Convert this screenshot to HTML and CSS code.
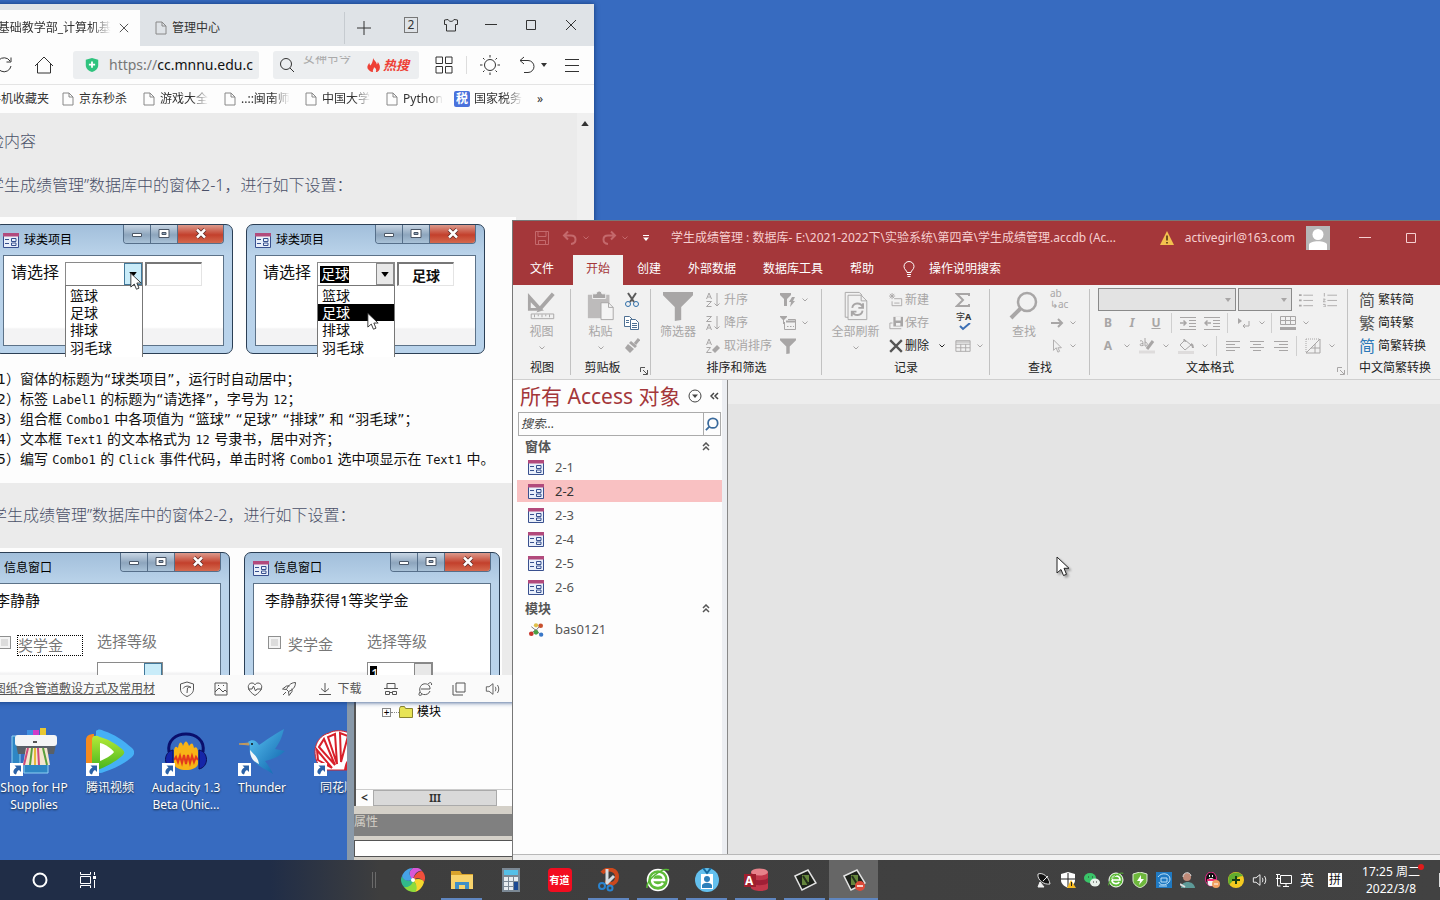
FILE: index.html
```html
<!DOCTYPE html>
<html lang="zh-CN">
<head>
  <meta charset="UTF-8">
  <title>学生成绩管理</title>
  <link rel="stylesheet" href="styles.css">
</head>
<body>
  <!-- Icon sprite -->
  <svg class="sprite" aria-hidden="true">
    <defs>
      <linearGradient id="sky" x1="0" y1="0" x2="1" y2="1"><stop offset="0" stop-color="#5cc6f4"/><stop offset="1" stop-color="#0a5ea8"/></linearGradient>
      <linearGradient id="lime" x1="0" y1="0" x2="0" y2="1"><stop offset="0" stop-color="#b5ea38"/><stop offset="1" stop-color="#46b51c"/></linearGradient>
    </defs>
    <symbol id="i-x" viewBox="0 0 12 12"><path d="M1 1l10 10M11 1L1 11"/></symbol>
    <symbol id="i-page" viewBox="0 0 12 14"><path d="M1 1h6l4 4v8H1zM7 1v4h4"/></symbol>
    <symbol id="i-plus" viewBox="0 0 14 14"><path d="M7 0v14M0 7h14"/></symbol>
    <symbol id="i-min" viewBox="0 0 12 12"><path d="M0 5.500h12"/></symbol>
    <symbol id="i-max" viewBox="0 0 12 12"><path d="M1.500 1.500h9v9h-9z"/></symbol>
    <symbol id="i-shirt" viewBox="0 0 16 14"><path d="M5 1.500L1.500 2v4.500h2V13h9V6.500h2V2L11 1.500C10 4 6 4 5 1.500z"/></symbol>
    <symbol id="i-reload" viewBox="0 0 18 18"><path d="M15 5a7 7 0 1 0 1 5M16 1.500V6h-4.500"/></symbol>
    <symbol id="i-home" viewBox="0 0 20 18"><path d="M1 10L10 1l9 9M3.500 8v9h13V8"/></symbol>
    <symbol id="i-shield" viewBox="0 0 16 18"><path d="M8 1l7 2v6c0 4-3 6.500-7 8-4-1.500-7-4-7-8V3z" fill="#2fc37e" stroke="none"/><path d="M8 5v7M4.500 8.500h7" stroke="#fff" stroke-width="2"/></symbol>
    <symbol id="i-search" viewBox="0 0 16 16"><circle cx="7" cy="7" r="5.500"/><path d="M11 11l4 4"/></symbol>
    <symbol id="i-flame" viewBox="0 0 14 15"><path d="M6 0c1 3 4 4 4 7 1-1 1-2 1-3 2 3 3 5 2 8-1 2-2 3-4 3 1-2 0-4-2-5 0 2-2 3-1 5-3 0-5-2-6-4-.5-3 1-4 2-6 0 1 .5 2 1 3C5 6 6 3 6 0z" fill="#ee4035" stroke="none"/></symbol>
    <symbol id="i-apps" viewBox="0 0 18 18"><path d="M1 1h6.500v6.500H1zM10.500 1H17v6.500h-6.500zM1 10.500h6.500V17H1zM10.500 10.500H17V17h-6.500z"/></symbol>
    <symbol id="i-sun" viewBox="0 0 20 20"><circle cx="10" cy="10" r="5.500"/><path d="M10 0v2.500M10 17.500V20M0 10h2.500M17.500 10H20M3 3l1.500 1.500M15.500 15.500L17 17M3 17l1.500-1.500M15.500 4.500L17 3"/></symbol>
    <symbol id="i-back" viewBox="0 0 18 18"><path d="M6 1L2 4.500 6 8M2 4.500h8a6 6 0 0 1 0 12H6"/></symbol>
    <symbol id="i-menu" viewBox="0 0 16 16"><path d="M1 2.500h14M1 8.500h14M1 14.500h14"/></symbol>
    <symbol id="i-tri" viewBox="0 0 6 4"><path d="M0 0h6L3 4z" fill="currentColor" stroke="none"/></symbol>
    <symbol id="i-chev" viewBox="0 0 6 4"><path d="M.5.5L3 3 5.500.5"/></symbol>
    <symbol id="i-form" viewBox="0 0 16 15"><path d="M.5.5h15v14H.5z" fill="#e9effa" stroke="#39508f"/><path d="M0 0h16v3.500H0z" fill="#b24a7c" stroke="none"/><path d="M2 6.500h4M2 10.500h4M8.500 5.500h4.500v3H8.500zM8.500 10h4.500v2.500H8.500z" stroke="#37508f"/></symbol>
    <symbol id="i-cursor" viewBox="0 0 14 21"><path d="M1 1v16l4-3.500 2.500 6 3-1.200-2.500-6H13z" fill="#fff" stroke="#222"/></symbol>
    <symbol id="w-min" viewBox="0 0 14 12"><path d="M2.500 5.500h9v3h-9z" fill="#fff" stroke="#4a5666"/></symbol>
    <symbol id="w-max" viewBox="0 0 14 12"><path d="M2 1.500h10v8H2z" fill="#fff" stroke="#4a5666"/><path d="M5 4.500h4v2H5z" fill="#8fa5bb" stroke="#4a5666"/></symbol>
    <symbol id="w-close" viewBox="0 0 14 12"><path d="M3 1.500l8 8M11 1.500l-8 8" stroke="#5c2a26" stroke-width="4"/><path d="M3 1.500l8 8M11 1.500l-8 8" stroke="#fff" stroke-width="2.500"/></symbol>
    <!-- status bar -->
    <symbol id="i-guard" viewBox="0 0 16 16"><path d="M8 1l6.500 2v5c0 4-3 6-6.500 7.500C4.500 14 1.500 12 1.500 8V3z"/><path d="M4 7.500c2-3 6-3 8-1-2-.5-3 0-3.500.5L8 12"/></symbol>
    <symbol id="i-pic" viewBox="0 0 16 16"><path d="M2 2h12v12H2zM2 11l4-4 4 4 2-2 2 2M5 4.500h1M10 4.500h1"/></symbol>
    <symbol id="i-heart" viewBox="0 0 16 16"><path d="M8 14.500C-2 8 1 2 5 2c2 0 3 1.500 3 2 0-.5 1-2 3-2 4 0 7 6-3 12.500zM1 8h4l1.500-3 2 5L10 8h5"/></symbol>
    <symbol id="i-rocket" viewBox="0 0 16 16"><path d="M14.500 1.500c-5 0-8 4-9 7l2 2c4-1.500 7-4 7-9zM5.500 8.500l-4-.5 4-3h3M7.500 10.500l.5 4 3-4v-3M2 14l3-3"/></symbol>
    <symbol id="i-down" viewBox="0 0 14 14"><path d="M7 1v9M3 6.500L7 10l4-3.500M1 12.500h12"/></symbol>
    <symbol id="i-spy" viewBox="0 0 16 16"><path d="M4 7V2.500h8V7M1 7.500h14M2.500 10.500h4v3h-4zM9.500 10.500h4v3h-4zM6.500 11.500h3"/></symbol>
    <symbol id="i-ie" viewBox="0 0 16 16"><path d="M13 10c-1 3-4 4-6.500 3.500-4-1-4.500-5-3-8C5 2.500 9 2 11.500 4c1.500 1.500 1.500 3 1.500 4H4M11 3c2-2 4-2 3.500 1M3 11c-2 3-1 4.500 2 2.500"/></symbol>
    <symbol id="i-wins" viewBox="0 0 16 16"><path d="M5 2h9v9H5zM2 4v10h10"/></symbol>
    <symbol id="i-sound" viewBox="0 0 18 16"><path d="M1.500 5.500h3L9 2v12l-4.500-3.500h-3zM11.500 5.500c1 1.500 1 3.500 0 5M14 3.500c2 3 2 6 0 9"/></symbol>
    <!-- ribbon -->
    <symbol id="r-save" viewBox="0 0 16 16"><path d="M1.500 1.500h13v13h-13zM4 1.500v5h8v-5M4.500 14.500v-4h7v4"/></symbol>
    <symbol id="r-undo" viewBox="0 0 16 16"><path d="M6 1.500l-4 4 4 4M2 5.500h7c6 0 6 8 0 8.500" stroke-width="2"/></symbol>
    <symbol id="r-redo" viewBox="0 0 16 16"><path d="M10 1.500l4 4-4 4M14 5.500H7c-6 0-6 8 0 8.500" stroke-width="2"/></symbol>
    <symbol id="r-qat" viewBox="0 0 6 6"><path d="M0 .5h6" /><path d="M0 2.500h6L3 6z" fill="currentColor" stroke="none"/></symbol>
    <symbol id="r-bulb" viewBox="0 0 12 16"><path d="M4 11.500c0-2-3-3-3-6a5 5 0 0 1 10 0c0 3-3 4-3 6zM4 13.500h4M4.500 15.500h3"/></symbol>
    <symbol id="r-warn" viewBox="0 0 14 14"><path d="M7 0l7 14H0z" fill="#f3c14e" stroke="none"/><path d="M7 4.500v5M7 11v1.500" stroke="#4b2a10" stroke-width="1.500"/></symbol>
    <symbol id="r-user" viewBox="0 0 24 24"><path d="M0 0h24v24H0z" fill="#b6b6b6" stroke="none"/><circle cx="12" cy="8.500" r="5.500" fill="#fff" stroke="none"/><path d="M3 24v-5c0-5 18-5 18 0v5z" fill="#fff" stroke="none"/></symbol>
    <symbol id="r-view" viewBox="0 0 32 30"><path d="M1 1l17 19H1z" fill="currentColor" stroke="none"/><path d="M4 11v6h6z" fill="#f1f1f1" stroke="none"/><path d="M28 2L14 18" stroke-width="4"/><path d="M13 17l-3 5 6-2z" fill="currentColor" stroke="none"/><path d="M4.500 23.500h24v5h-24zM8 24v3M12 24v2M16 24v3M20 24v2M24 24v3"/></symbol>
    <symbol id="r-paste" viewBox="0 0 30 32"><path d="M1 4h23v25H1z" fill="#bdbbbb" stroke="none"/><path d="M6 8V3h4a3 3 0 0 1 6 0h4v5z" fill="currentColor" stroke="#f1f1f1"/><path d="M15 12.500h8l5 5v13H15z" fill="#f4f4f4"/><path d="M23 12.500v5h5"/></symbol>
    <symbol id="r-cut" viewBox="0 0 16 16"><path d="M4 1l6 9M12 1L6 10" stroke="#5a5a5a" stroke-width="2"/><circle cx="4" cy="12" r="2.500" stroke="#2f6ea8"/><circle cx="12" cy="12" r="2.500" stroke="#2f6ea8"/></symbol>
    <symbol id="r-copy" viewBox="0 0 16 16"><path d="M.5 1.500h5l3 3v7h-8z" fill="#fff" stroke="#4d6f92"/><path d="M6.500 4.500h5l3 3v7h-8z" fill="#fff" stroke="#4d6f92"/><path d="M8 8.500h5M8 10.500h5M8 12.500h5M2 5.500h3M2 7.500h3" stroke="#4d6f92"/></symbol>
    <symbol id="r-brush" viewBox="0 0 16 16"><path d="M15 1l-4 5" stroke-width="3"/><path d="M7 3l6 5-2 2-6-5zM4 6l6 5-4 4-5-5z" fill="currentColor" stroke="none"/></symbol>
    <symbol id="r-funnel" viewBox="0 0 28 28"><path d="M0 1h28v3L17 15v12l-6 1V15L0 4z" fill="currentColor" stroke="none"/></symbol>
    <symbol id="r-az" viewBox="0 0 16 16"><path d="M1.500 7l2.500-6 2.500 6M2.500 5h3M1.500 9.500h5l-5 5h5M12 1v13M9.500 11.500L12 14l2.500-2.500"/></symbol>
    <symbol id="r-za" viewBox="0 0 16 16"><path d="M1.500 1.500h5l-5 5h5M1.500 15L4 9l2.500 6M2.500 13h3M12 1v13M9.500 11.500L12 14l2.500-2.500"/></symbol>
    <symbol id="r-clear" viewBox="0 0 16 16"><path d="M1.500 7l2.500-6 2.500 6M2.500 5h3M1.500 9.500h4l-4 5h5"/><path d="M12 7l3 3-5 5-3-3z" fill="currentColor" stroke="none"/></symbol>
    <symbol id="r-flash" viewBox="0 0 16 16"><path d="M0 1h11v2L7 7v7H4V7L0 3zM12 5h3l-2 4h2l-5 6 1-5H9z" fill="currentColor" stroke="none"/></symbol>
    <symbol id="r-adv" viewBox="0 0 16 16"><path d="M0 1h7v1L4 5v4H3V5L0 2z" fill="currentColor" stroke="none"/><path d="M4.500 7v7.500h11v-10H8M7 11.500h1.500M10 11.500h1.500M13 11.500h1"/><path d="M6 6.500h9" stroke-width="2"/></symbol>
    <symbol id="r-refresh" viewBox="0 0 26 32"><path d="M4.500 28h-3V1.500h15l3 3M4.500 4.500h14l6 6v20h-20zM18.500 4.500v6h6"/><path d="M9 18c1-6 9-6 11-1M20.500 13v5h-5M20 21c-1 6-9 6-11 1M8.500 27v-5h5" stroke-width="2"/></symbol>
    <symbol id="r-new" viewBox="0 0 16 16"><path d="M6 6.500h8.500v8h-11v-5M6 11.500h6M1 1l5 5M6 1L1 6M3.500 0v7M0 3.500h7"/></symbol>
    <symbol id="r-disk" viewBox="0 0 16 16"><path d="M5 1h11v11H5z" fill="currentColor" stroke="none"/><path d="M7.500 1h6v4h-6zM8 8h5v3H8z" fill="#f1f1f1" stroke="none"/><path d="M1 8v6.500h13M1 8h3"/></symbol>
    <symbol id="r-sum" viewBox="0 0 16 16"><path d="M14 4V2H2l6 6-6 6h12v-2" stroke-width="2"/></symbol>
    <symbol id="r-check" viewBox="0 0 16 8"><path d="M4 3l3 3 7-6" stroke="#3b6fb5" stroke-width="2"/></symbol>
    <symbol id="r-grid" viewBox="0 0 18 16"><path d="M1 2h16v12H1zM1 6h16M1 10h16M6.500 6v8M12 6v8M1 3.500h16"/></symbol>
    <symbol id="r-find" viewBox="0 0 30 30"><circle cx="18" cy="11" r="9" stroke-width="2.500"/><path d="M12 17L2 27" stroke-width="4"/></symbol>
    <symbol id="r-arrow" viewBox="0 0 14 12"><path d="M1 6h11M8 2l4 4-4 4" stroke-width="2"/></symbol>
    <symbol id="r-ptr" viewBox="0 0 12 16"><path d="M2 1v12l3-3 2 5 2-1-2-4h4z"/></symbol>
    <symbol id="r-ul" viewBox="0 0 16 16"><path d="M5 2.500h11M5 8.500h11M5 14.500h11"/><path d="M0 2.500h3M0 8.500h3M0 14.500h3" stroke-width="2"/></symbol>
    <symbol id="r-ol" viewBox="0 0 16 16"><path d="M5 2.500h11M5 8.500h11M5 14.500h11M1.500 0v4M0 7h2.500L0 10h3M0 13h2.500v3H0"/></symbol>
    <symbol id="r-in" viewBox="0 0 16 14"><path d="M0 1.500h16M9 4.500h7M9 7.500h7M9 10.500h7M0 13.500h16"/><path d="M0 7h6M3.500 4.500L6 7 3.500 9.500" stroke-width="1.500"/></symbol>
    <symbol id="r-out" viewBox="0 0 16 14"><path d="M0 1.500h16M9 4.500h7M9 7.500h7M9 10.500h7M0 13.500h16"/><path d="M1 7h6M3.500 4.500L1 7l2.500 2.500" stroke-width="1.500"/></symbol>
    <symbol id="r-para" viewBox="0 0 12 12"><path d="M0 1l4 3-4 3z" fill="currentColor" stroke="none"/><path d="M11 4v5H5M7 7L5 9l2 2"/></symbol>
    <symbol id="r-rows" viewBox="0 0 16 16"><path d="M.5 1.500h15v8H.5zM.5 5.500h15M5.500 2v7M10.500 2v7"/><path d="M0 13.500h16" stroke-width="3"/></symbol>
    <symbol id="r-mark" viewBox="0 0 16 16"><path d="M14 3L8 11" stroke-width="3"/><path d="M1 3c3-1 3 1 3 5M4 5.500c-4 0-4 3 0 2M6 0v8c3 1 3-4 0-4"/><path d="M0 14h16" stroke="#dedcdc" stroke-width="3"/></symbol>
    <symbol id="r-bucket" viewBox="0 0 16 16"><path d="M2 7l5-5 6 5-6 5zM6 4V1l2 3"/><path d="M13 6c2 1 2 3 2 4" stroke-width="2"/><path d="M0 14.500h16" stroke="#dedcdc" stroke-width="3"/></symbol>
    <symbol id="r-left" viewBox="0 0 14 12"><path d="M0 1.500h14M0 4.500h9M0 7.500h14M0 10.500h9"/></symbol>
    <symbol id="r-mid" viewBox="0 0 14 12"><path d="M0 1.500h14M3 4.500h8M0 7.500h14M3 10.500h8"/></symbol>
    <symbol id="r-right" viewBox="0 0 14 12"><path d="M0 1.500h14M5 4.500h9M0 7.500h14M5 10.500h9"/></symbol>
    <symbol id="r-cond" viewBox="0 0 16 16"><path d="M1 1h14" stroke-dasharray="1 1"/><path d="M1 1v14" stroke-dasharray="1 1"/><path d="M15 1v14H1zM10 6v9M6 10h9"/></symbol>
    <symbol id="r-launch" viewBox="0 0 8 8"><path d="M.5 5V.5H5M3 3l4 4M7.500 3v4.500H3"/></symbol>
    <symbol id="r-up2" viewBox="0 0 8 9"><path d="M1 4l3-3 3 3M1 8l3-3 3 3" stroke-width="1.500"/></symbol>
    <symbol id="r-left2" viewBox="0 0 9 8"><path d="M4 1L1 4l3 3M8 1L5 4l3 3" stroke-width="1.500"/></symbol>
    <symbol id="r-drop" viewBox="0 0 14 14"><circle cx="7" cy="7" r="6"/><path d="M4 5.500h6L7 9z" fill="currentColor" stroke="none"/></symbol>
    <symbol id="r-module" viewBox="0 0 16 16"><path d="M3 12l5-4 4 5M3 5l5 4 5-6" stroke="#777"/><circle cx="3" cy="12.500" r="2.500" fill="#c8372d" stroke="none"/><circle cx="8" cy="11" r="2.500" fill="#4ba046" stroke="none"/><circle cx="13.500" cy="13.500" r="2.300" fill="#3a78c8" stroke="none"/><circle cx="8" cy="3.500" r="2.300" fill="#dfc04a" stroke="none"/><circle cx="13" cy="4" r="2.500" fill="#c8502d" stroke="none"/></symbol>
    <!-- desktop shortcuts -->
    <symbol id="d-link" viewBox="0 0 13 13"><path d="M0 0h13v13H0z" fill="#fff" stroke="none"/><path d="M4.500 2.500H11V9L9 7c-2 1-2 2-3 4.500-4-1-3-5 .500-7z" fill="#2b62a8" stroke="none"/></symbol>
    <symbol id="d-hp" viewBox="0 0 48 48"><path d="M2 8h8v36H2zM14 34h24v11H14z" fill="#2e86c4" stroke="#8fd0f2"/><path d="M17 2h7v5h-7z" fill="#3f8fe0" stroke="none"/><path d="M23 2h6v5h-6z" fill="#d03cc8" stroke="none"/><path d="M30 0h6v7h-6z" fill="#e8c832" stroke="none"/><path d="M6 16h40l-2 10H8z" fill="#596068" stroke="none"/><rect x="5" y="7" width="42" height="11" rx="3" fill="#f4f5f6" stroke="none"/><path d="M16 20h21l3 17H13z" fill="#f5e6cf" stroke="none"/><path d="M18 20l-4 17M28 20l1 17" stroke="#cf4a7c" stroke-width="2"/><path d="M22 20l-2 17M33 20l4 17" stroke="#5aa03c" stroke-width="2"/><path d="M25 20v17" stroke="#e5b93a" stroke-width="2"/><path d="M23 14h4" stroke="#555" stroke-width="2"/></symbol>
    <symbol id="d-video" viewBox="0 0 48 48"><path d="M8 6c-5 0-8 2-8 6v26c0 4 3 6 8 6z" fill="#f58a1f" stroke="none"/><path d="M10 3c2-2 5-2 8 0 10 3 20 10 28 17 3 3 3 6 0 9-8 7-18 12-28 15-4 2-8 1-8-3z" fill="#45b0f5" stroke="none"/><path d="M6 12c0-5 4-5 8-3 8 2 16 7 22 12 3 3 3 4 0 7-6 5-14 10-22 13-4 2-8 1-8-3z" fill="url(#lime)" stroke="none"/><path d="M14 15c5 1 11 5 14 9-3 4-9 7-14 9z" fill="#fff" stroke="none"/></symbol>
    <symbol id="d-aud" viewBox="0 0 48 48"><path d="M12 22c1-4 2-4 4-2 1-7 4-7 5-2 2-6 4-6 6 0 3-4 4-3 5 2 2-2 4 0 4 4v12c-2 8-22 8-24 0z" fill="#f8b416" stroke="none"/><path d="M12 32l2-3 2 5 2-6 2 7 2-8 2 9 2-9 2 8 2-7 2 6 2-5 2 3" stroke="#e23a1c" stroke-width="2"/><path d="M7 24C3 0 45 0 41 24" stroke="#0a0f6c" stroke-width="3"/><path d="M11 22v19C1 39 1 24 11 22zM37 22v19c10-2 10-17 0-19z" fill="#1526a8" stroke="#090e5a"/></symbol>
    <symbol id="d-bird" viewBox="0 0 48 48"><path d="M1 16l10-1v2z" fill="#c49a5c" stroke="#c49a5c"/><path d="M10 14c4-3 8-2 11 3 6-4 14-10 25-16-2 8-4 13-9 20l10 2c-6 6-12 8-20 10 3 4 6 8 8 13-9-6-20-9-23-21-1-4 1-8-2-11z" fill="url(#sky)" stroke="none"/><path d="M12 22c3 4 8 6 9 14-5-2-9-6-9-14z" fill="#f2f6f8" stroke="none"/><circle cx="14" cy="16" r="1" fill="#111" stroke="none"/></symbol>
    <symbol id="d-ths" viewBox="0 0 48 48"><path d="M4 36C-3 22 3 8 15 5 26-1 46 5 46 22v20H12z" fill="#fff" stroke="#d8202a"/><path d="M4 32l14 8L3 22zM5 19l16 18L10 11zM14 9l9 27-2-30zM26 5l1 29 7-26z" fill="#fff" stroke="#d8202a" stroke-width="2"/><path d="M30 42c2-14 8-14 14-10v10z" fill="#d8202a" stroke="none"/></symbol>
    <symbol id="d-folder" viewBox="0 0 14 12"><path d="M.5 2.500l1-2h4l1 2h7v9H.5z" fill="#e8e456" stroke="#8a8430"/></symbol>
    <!-- taskbar -->
    <symbol id="t-cortana" viewBox="0 0 16 16"><circle cx="8" cy="8" r="6.500" stroke-width="2"/></symbol>
    <symbol id="t-view" viewBox="0 0 16 16"><path d="M.5 4.500h10v7H.5zM.5 0v2.500h10V0M.5 16v-2.500h10V16M14.500 0v3M14.500 8v8"/><path d="M13 4h3v3h-3z" fill="currentColor" stroke="none"/></symbol>
    <symbol id="t-swirl" viewBox="0 0 24 24"><g stroke="none"><path d="M12 12C8 9 7 3 12 0c5-1 8 1 9 3-4-1-8 3-9 9z" fill="#d857d8"/><path d="M12 12c1-5 5-9 9-9 3 3 4 7 2 11-2-4-7-5-11-2z" fill="#f04f3c"/><path d="M12 12c5-2 10-1 11 2-1 5-5 9-9 10 2-4 1-9-2-12z" fill="#f5d72e"/><path d="M12 12c4 4 5 9 2 12-5 0-9-2-11-5 4 0 8-3 9-7z" fill="#8cdb3c"/><path d="M12 12c0 4-4 8-9 7-3-3-4-8-2-11 2 4 6 6 11 4z" fill="#32b98a"/><path d="M12 12C6 14 2 12 1 8c2-5 6-8 11-8-5 3-4 8 0 12z" fill="#46a3e6"/></g><circle cx="12" cy="12" r="2" fill="#fff" stroke="none"/></symbol>
    <symbol id="t-folder" viewBox="0 0 24 24"><path d="M1 3h9l2 3h11v15H1z" fill="#d8a32c" stroke="none"/><path d="M1 7h22v14H1z" fill="#f8d36c" stroke="none"/><path d="M5 21v-7h14v7h-4v-4H9v4z" fill="#3f8fc8" stroke="none"/></symbol>
    <symbol id="t-calc" viewBox="0 0 24 24"><path d="M3 0h18v24H3z" fill="#7b8894" stroke="none"/><path d="M5 2h14v5H5z" fill="#55c0e8" stroke="none"/><path d="M5 9h4v4H5zM10 9h4v4h-4zM15 9h4v4h-4zM5 14h4v4H5zM10 14h4v4h-4zM5 19h4v3H5zM10 19h4v3h-4z" fill="#e8edf1" stroke="none"/><path d="M15 14h4v8h-4z" fill="#1c4a94" stroke="none"/></symbol>
    <symbol id="t-snip" viewBox="0 0 24 24"><path d="M5 5c5-6 15-4 15 4 0 4-3 7-7 7L9 12" stroke="#cd481c" stroke-width="4"/><path d="M10 1v15M17 8l-8 8" stroke="#d6dde2" stroke-width="3"/><circle cx="5" cy="18" r="3" stroke="#2a84d0" stroke-width="2"/><circle cx="13" cy="20" r="2.500" stroke="#2a84d0" stroke-width="2"/></symbol>
    <symbol id="t-e" viewBox="0 0 24 24"><circle cx="12" cy="12" r="10.500" fill="#5fbb3a" stroke="#fff" stroke-width="1.500"/><path d="M6 12h12c0-8-12-8-12 0 0 6 8 7 11 3" stroke="#fff" stroke-width="2.500"/><path d="M1 20C0 12 16-1 23 2" stroke="#56b833" stroke-width="1.500"/></symbol>
    <symbol id="t-id" viewBox="0 0 24 24"><circle cx="12" cy="12" r="12" fill="#63c0ee" stroke="none"/><path d="M6 6h12v15H6z" fill="#fff" stroke="none"/><circle cx="12" cy="11" r="3" fill="#2b7fba" stroke="none"/><path d="M7 20v-3c2-3 8-3 10 0v3z" fill="#2b7fba" stroke="none"/><path d="M8 0l4 5 4-5" stroke="#156a9f" stroke-width="2"/></symbol>
    <symbol id="t-access" viewBox="0 0 24 24"><path d="M7 4v16c2 4 17 4 17 0V4z" fill="#c2374a" stroke="none"/><path d="M7 10c3 3 14 3 17 0v5c-3 3-14 3-17 0z" fill="#a01f36" stroke="none"/><ellipse cx="15.500" cy="4" rx="8.500" ry="3.500" fill="#e7828a" stroke="none"/><path d="M0 6h12v13H0z" fill="#9f1f2d" stroke="none"/></symbol>
    <symbol id="t-cam" viewBox="0 0 24 24"><path d="M2 8l13-6 8 13-14 7z" fill="#1d211b" stroke="#e2e2e2" stroke-width="1.500"/><path d="M9 7h7v10H9z" fill="#65863c" stroke="none"/><path d="M10 8l5 8M15 14v3" stroke="#24301a" stroke-width="2"/></symbol>
    <symbol id="t-rec" viewBox="0 0 24 24"><use href="#t-cam"/><circle cx="18" cy="18" r="5" fill="#dd4b3a" stroke="none"/><path d="M15 18h6" stroke="#fff" stroke-width="1.500"/></symbol>
    <symbol id="y-dish" viewBox="0 0 16 16"><path d="M2 2c5-2 11 3 12 10C8 13 1 8 2 2z" fill="#141414" stroke="#e0e0e0"/><path d="M12 4L7 9M4 10l-2 5h6z" stroke="#eee" fill="#eee"/></symbol>
    <symbol id="y-def" viewBox="0 0 16 16"><path d="M8 0l7 2v6c0 4-3 6-7 8-4-2-7-4-7-8V2z" fill="#fff" stroke="none"/><path d="M8 1v14M1 7h14" stroke="#222"/><path d="M11 8l5 8H7z" fill="#f5b921" stroke="none"/><path d="M11.500 10v4" stroke="#222"/></symbol>
    <symbol id="y-wx" viewBox="0 0 16 16"><ellipse cx="6" cy="6" rx="6" ry="5" fill="#3ac569" stroke="none"/><ellipse cx="11" cy="10.500" rx="5" ry="4" fill="#e8f0ea" stroke="none"/><path d="M4 5h1M8 5h1M9 10h1M12 10h1" stroke="#333"/></symbol>
    <symbol id="y-safe" viewBox="0 0 16 16"><path d="M8 0l7 2v6c0 4-3 6-7 8-4-2-7-4-7-8V2z" fill="#6eb83c" stroke="#dcebd0"/><path d="M9 3L5 9h3l-1 4 5-6H9z" fill="#fff" stroke="none"/></symbol>
    <symbol id="y-blue" viewBox="0 0 16 16"><path d="M0 0h16v16H0z" fill="#1f79c2" stroke="none"/><path d="M2 5c3-5 12-4 12 2S4 15 3 10M5 6h6v4H5zM3 14h8" stroke="#bce0f8"/></symbol>
    <symbol id="y-man" viewBox="0 0 16 16"><circle cx="7" cy="5" r="4" fill="#c08a78" stroke="none"/><path d="M3 5c0-5 7-6 8-1" stroke="#ddd"/><path d="M1 16c0-8 13-8 14 0z" fill="#5d9a98" stroke="none"/><path d="M0 12l5 3" stroke="#ddd" stroke-width="2"/></symbol>
    <symbol id="y-qq" viewBox="0 0 16 16"><ellipse cx="7" cy="7" rx="5.500" ry="7" fill="#111" stroke="#e92d8c"/><ellipse cx="7" cy="10" rx="3.500" ry="4" fill="#f5f5f5" stroke="none"/><path d="M3 8h9" stroke="#ed2c78" stroke-width="2"/><path d="M5 4h1M8 4h1" stroke="#fff" stroke-width="2"/><circle cx="12" cy="12" r="4" fill="#f1a060" stroke="none"/><path d="M10 12h4" stroke="#fff"/></symbol>
    <symbol id="y-add" viewBox="0 0 16 16"><circle cx="8" cy="8" r="8" fill="#f4ca21" stroke="none"/><path d="M1 4c5-5 11-4 14 0-4 0-9 3-14 9-1-3-1-6 0-9z" fill="#62ae2f" stroke="none"/><path d="M8 4v8M4 8h8" stroke="#173f12" stroke-width="2"/></symbol>
    <symbol id="y-net" viewBox="0 0 16 16"><path d="M4.500 3.500h11v8h-11zM7 14.500h6M10 12v2M0 2.500h4M0 6.500h4M1.500 2v12h3"/></symbol>
  </svg>

  <div class="desktop">
    <main class="workspace">
      <!-- Desktop shortcuts -->
      <nav class="shortcuts">
        <a href="#" class="shortcut"><svg class="pic"><use href="#d-hp"/></svg><svg class="link"><use href="#d-link"/></svg><span>Shop for HP Supplies</span></a>
        <a href="#" class="shortcut"><svg class="pic"><use href="#d-video"/></svg><svg class="link"><use href="#d-link"/></svg><span>腾讯视频</span></a>
        <a href="#" class="shortcut"><svg class="pic"><use href="#d-aud"/></svg><svg class="link"><use href="#d-link"/></svg><span>Audacity 1.3 Beta (Unic...</span></a>
        <a href="#" class="shortcut"><svg class="pic"><use href="#d-bird"/></svg><svg class="link"><use href="#d-link"/></svg><span>Thunder</span></a>
        <a href="#" class="shortcut"><svg class="pic"><use href="#d-ths"/></svg><svg class="link"><use href="#d-link"/></svg><span>同花顺</span></a>
      </nav>

      <!-- Project window -->
      <section class="project">
        <div class="tree">
          <div class="tree-item"><button class="expand">+</button><i class="dots"></i><svg class="ic14"><use href="#d-folder"/></svg><span>模块</span></div>
          <div class="hscroll"><button>&lt;</button><div class="hthumb">III</div></div>
        </div>
        <div class="prop-title">属性</div>
        <input class="prop-input" aria-label="属性">
      </section>

      <!-- Browser -->
      <section class="browser">
        <header class="tabstrip">
          <div class="tab active"><span class="fade">机基础教学部_计算机基</span><button class="bare"><svg class="ic10"><use href="#i-x"/></svg></button></div>
          <div class="tab"><svg class="page-ic"><use href="#i-page"/></svg><span>管理中心</span></div>
          <button class="bare newtab"><svg class="ic14"><use href="#i-plus"/></svg></button>
          <div class="win-btns">
            <button class="count">2</button>
            <button class="bare"><svg class="ic16"><use href="#i-shirt"/></svg></button>
            <button class="bare"><svg class="ic12"><use href="#i-min"/></svg></button>
            <button class="bare"><svg class="ic12"><use href="#i-max"/></svg></button>
            <button class="bare"><svg class="ic12"><use href="#i-x"/></svg></button>
          </div>
        </header>
        <div class="toolbar">
          <button class="bare"><svg class="ic18"><use href="#i-reload"/></svg></button>
          <button class="bare"><svg class="ic20"><use href="#i-home"/></svg></button>
          <div class="url"><svg class="ic16"><use href="#i-shield"/></svg><a href="#"><em>https://</em>cc.mnnu.edu.c</a></div>
          <div class="find"><svg class="ic16"><use href="#i-search"/></svg><div class="slide"><input aria-label="搜索" placeholder="女神节今"></div><svg class="ic14"><use href="#i-flame"/></svg><b>热搜</b></div>
          <div class="tools">
            <button class="bare"><svg class="ic18"><use href="#i-apps"/></svg></button>
            <i class="tool-sep"></i>
            <button class="bare"><svg class="ic20"><use href="#i-sun"/></svg></button>
            <button class="bare back"><svg class="ic18"><use href="#i-back"/></svg><svg class="tri"><use href="#i-tri"/></svg></button>
            <button class="bare"><svg class="ic16"><use href="#i-menu"/></svg></button>
          </div>
        </div>
        <nav class="bookmarks">
          <a href="#" class="first"><span>手机收藏夹</span></a>
          <a href="#"><svg class="page-ic"><use href="#i-page"/></svg><span>京东秒杀</span></a>
          <a href="#"><svg class="page-ic"><use href="#i-page"/></svg><span class="fade">游戏大全</span></a>
          <a href="#"><svg class="page-ic"><use href="#i-page"/></svg><span class="fade">..::闽南师</span></a>
          <a href="#"><svg class="page-ic"><use href="#i-page"/></svg><span class="fade">中国大学</span></a>
          <a href="#" class="narrow"><svg class="page-ic"><use href="#i-page"/></svg><span class="fade">Python</span></a>
          <a href="#" class="tax"><b>税</b><span class="fade">国家税务</span></a>
          <button class="bare">»</button>
        </nav>
        <article class="page">
          <div class="scrollbar"><svg class="up"><use href="#i-tri"/></svg></div>
          <p>验内容</p>
          <p>学生成绩管理”数据库中的窗体2-1，进行如下设置：</p>
          <figure class="fig-one">
            <div class="dialogs">
              <div class="dialog small">
                <div class="dlg-title"><svg class="form-ic"><use href="#i-form"/></svg><span>球类项目</span><div class="dlg-btns"><button class="bare"><svg><use href="#w-min"/></svg></button><button class="bare"><svg><use href="#w-max"/></svg></button><button class="bare close"><svg><use href="#w-close"/></svg></button></div></div>
                <form class="dlg-body">
                  <label for="ball-a">请选择</label>
                  <div class="combo hot">
                    <select id="ball-a"><option></option></select><span class="drop"><svg class="tri"><use href="#i-tri"/></svg></span>
                    <ul><li>篮球</li><li>足球</li><li>排球</li><li>羽毛球</li></ul>
                    <svg class="pointer on-drop"><use href="#i-cursor"/></svg>
                  </div>
                  <input class="result" aria-label="Text1">
                </form>
              </div>
              <div class="dialog small">
                <div class="dlg-title"><svg class="form-ic"><use href="#i-form"/></svg><span>球类项目</span><div class="dlg-btns"><button class="bare"><svg><use href="#w-min"/></svg></button><button class="bare"><svg><use href="#w-max"/></svg></button><button class="bare close"><svg><use href="#w-close"/></svg></button></div></div>
                <form class="dlg-body">
                  <label for="ball-b">请选择</label>
                  <div class="combo">
                    <select id="ball-b" class="marked"><option>足球</option></select><span class="drop"><svg class="tri"><use href="#i-tri"/></svg></span>
                    <ul><li>篮球</li><li class="picked">足球</li><li>排球</li><li>羽毛球</li></ul>
                    <svg class="pointer on-list"><use href="#i-cursor"/></svg>
                  </div>
                  <input class="result" aria-label="Text1" value="足球">
                </form>
              </div>
            </div>
            <div class="tasks">
              <div>（1）窗体的标题为“球类项目”，运行时自动居中；</div>
              <div>（2）标签 <code>Label1</code> 的标题为“请选择”，字号为 <code>12</code>；</div>
              <div>（3）组合框 <code>Combo1</code> 中各项值为 “篮球” “足球” “排球” 和 “羽毛球”；</div>
              <div>（4）文本框 <code>Text1</code> 的文本格式为 <code>12</code> 号隶书，居中对齐；</div>
              <div>（5）编写 <code>Combo1</code> 的 <code>Click</code> 事件代码，单击时将 <code>Combo1</code> 选中项显示在 <code>Text1</code> 中。</div>
            </div>
          </figure>
          <p class="second">学生成绩管理”数据库中的窗体2-2，进行如下设置：</p>
          <figure class="fig-two">
            <div class="dialogs">
              <div class="dialog">
                <div class="dlg-title"><svg class="form-ic"><use href="#i-form"/></svg><span>信息窗口</span><div class="dlg-btns"><button class="bare"><svg><use href="#w-min"/></svg></button><button class="bare"><svg><use href="#w-max"/></svg></button><button class="bare close"><svg><use href="#w-close"/></svg></button></div></div>
                <form class="dlg-info">
                  <div class="info">李静静</div>
                  <div class="award">
                    <input type="checkbox" id="award-a"><label for="award-a" class="focus">奖学金</label>
                    <div class="level"><label for="level-a">选择等级</label><div class="combo hot"><select id="level-a"><option></option></select><span class="drop"></span></div></div>
                  </div>
                </form>
              </div>
              <div class="dialog">
                <div class="dlg-title"><svg class="form-ic"><use href="#i-form"/></svg><span>信息窗口</span><div class="dlg-btns"><button class="bare"><svg><use href="#w-min"/></svg></button><button class="bare"><svg><use href="#w-max"/></svg></button><button class="bare close"><svg><use href="#w-close"/></svg></button></div></div>
                <form class="dlg-info">
                  <div class="info">李静静获得1等奖学金</div>
                  <div class="award">
                    <input type="checkbox" id="award-b"><label for="award-b">奖学金</label>
                    <div class="level"><label for="level-b">选择等级</label><div class="combo"><select id="level-b" class="marked one"><option>1</option></select><span class="drop"></span></div></div>
                  </div>
                </form>
              </div>
            </div>
          </figure>
        </article>
        <footer class="statusbar">
          <a href="#">图纸?含管道敷设方式及常用材</a>
          <button class="bare"><svg class="ic16"><use href="#i-guard"/></svg></button>
          <button class="bare"><svg class="ic16"><use href="#i-pic"/></svg></button>
          <button class="bare"><svg class="ic16"><use href="#i-heart"/></svg></button>
          <button class="bare"><svg class="ic16"><use href="#i-rocket"/></svg></button>
          <button class="bare dl"><svg class="ic14"><use href="#i-down"/></svg>下载</button>
          <button class="bare"><svg class="ic16"><use href="#i-spy"/></svg></button>
          <button class="bare"><svg class="ic16"><use href="#i-ie"/></svg></button>
          <button class="bare"><svg class="ic16"><use href="#i-wins"/></svg></button>
          <button class="bare"><svg class="ic16"><use href="#i-sound"/></svg></button>
        </footer>
      </section>

      <!-- Access -->
      <section class="access">
        <header class="titlebar">
          <button class="bare dim"><svg class="ic16"><use href="#r-save"/></svg></button>
          <button class="bare dim"><svg class="ic16"><use href="#r-undo"/></svg><svg class="chev"><use href="#i-chev"/></svg></button>
          <button class="bare dim"><svg class="ic16"><use href="#r-redo"/></svg><svg class="chev"><use href="#i-chev"/></svg></button>
          <button class="bare qat"><svg class="qat-ic"><use href="#r-qat"/></svg></button>
          <span class="caption">学生成绩管理 : 数据库- E:\2021-2022下\实验系统\第四章\学生成绩管理.accdb (Ac...</span>
          <div class="account">
            <svg class="ic14"><use href="#r-warn"/></svg>
            <span>activegirl@163.com</span>
            <svg class="avatar"><use href="#r-user"/></svg>
            <button class="bare"><svg class="ic12"><use href="#i-min"/></svg></button>
            <button class="bare"><svg class="ic12"><use href="#i-max"/></svg></button>
          </div>
        </header>
        <nav class="ribbon-tabs">
          <button>文件</button>
          <button class="active">开始</button>
          <button>创建</button>
          <button>外部数据</button>
          <button>数据库工具</button>
          <button>帮助</button>
          <button class="tell"><svg class="bulb"><use href="#r-bulb"/></svg>操作说明搜索</button>
        </nav>
        <div class="ribbon">
          <div class="group g-view">
            <div class="cells"><button class="big"><svg class="ic30"><use href="#r-view"/></svg>视图<svg class="chev"><use href="#i-chev"/></svg></button></div>
            <div class="group-name">视图</div>
          </div>
          <div class="group g-clip">
            <div class="cells">
              <button class="big"><svg class="ic30"><use href="#r-paste"/></svg>粘贴<svg class="chev"><use href="#i-chev"/></svg></button>
              <div class="stack">
                <button class="mini"><svg class="ic16"><use href="#r-cut"/></svg></button>
                <button class="mini"><svg class="ic16"><use href="#r-copy"/></svg></button>
                <button class="mini"><svg class="ic16"><use href="#r-brush"/></svg></button>
              </div>
            </div>
            <div class="group-name">剪贴板</div><svg class="launch on"><use href="#r-launch"/></svg>
          </div>
          <div class="group g-sort">
            <div class="cells">
              <button class="big"><svg class="ic30"><use href="#r-funnel"/></svg>筛选器</button>
              <div class="stack">
                <button class="row"><svg class="ic16"><use href="#r-az"/></svg>升序</button>
                <button class="row"><svg class="ic16"><use href="#r-za"/></svg>降序</button>
                <button class="row"><svg class="ic16"><use href="#r-clear"/></svg>取消排序</button>
              </div>
              <div class="stack">
                <button class="row"><svg class="ic16"><use href="#r-flash"/></svg><svg class="chev"><use href="#i-chev"/></svg></button>
                <button class="row"><svg class="ic16"><use href="#r-adv"/></svg><svg class="chev"><use href="#i-chev"/></svg></button>
                <button class="row"><svg class="ic16"><use href="#r-funnel"/></svg></button>
              </div>
            </div>
            <div class="group-name">排序和筛选</div>
          </div>
          <div class="group g-rec">
            <div class="cells">
              <button class="big"><svg class="ic30"><use href="#r-refresh"/></svg>全部刷新<svg class="chev"><use href="#i-chev"/></svg></button>
              <div class="stack records">
                <button class="row"><svg class="ic14"><use href="#r-new"/></svg>新建</button>
                <button class="row"><svg class="ic14"><use href="#r-disk"/></svg>保存</button>
                <button class="row on"><svg class="ic14 bold"><use href="#i-x"/></svg>删除<svg class="chev"><use href="#i-chev"/></svg></button>
              </div>
              <div class="stack">
                <button class="row"><svg class="ic16"><use href="#r-sum"/></svg></button>
                <button class="row spell"><span>字<b>A</b></span><svg class="tick"><use href="#r-check"/></svg></button>
                <button class="row"><svg class="ic16"><use href="#r-grid"/></svg><svg class="chev"><use href="#i-chev"/></svg></button>
              </div>
            </div>
            <div class="group-name">记录</div>
          </div>
          <div class="group g-find">
            <div class="cells">
              <button class="big"><svg class="ic30"><use href="#r-find"/></svg>查找</button>
              <div class="stack">
                <button class="row abac"><span>ab</span><span>↳ac</span></button>
                <button class="row"><svg class="ic14"><use href="#r-arrow"/></svg><svg class="chev"><use href="#i-chev"/></svg></button>
                <button class="row"><svg class="ic14"><use href="#r-ptr"/></svg><svg class="chev"><use href="#i-chev"/></svg></button>
              </div>
            </div>
            <div class="group-name">查找</div>
          </div>
          <div class="group g-text">
            <div class="fmt pickers">
              <div class="picker face"><select aria-label="字体"><option></option></select><svg class="tri"><use href="#i-tri"/></svg></div>
              <div class="picker size"><select aria-label="字号"><option></option></select><svg class="tri"><use href="#i-tri"/></svg></div>
              <button class="mini"><svg class="ic14"><use href="#r-ul"/></svg></button>
              <button class="mini"><svg class="ic14"><use href="#r-ol"/></svg></button>
            </div>
            <div class="fmt">
              <button class="mini"><b>B</b></button><button class="mini"><b><i>I</i></b></button><button class="mini"><b><u>U</u></b></button>
              <i class="fmt-sep"></i>
              <button class="mini"><svg class="ic16"><use href="#r-in"/></svg></button><button class="mini"><svg class="ic16"><use href="#r-out"/></svg></button>
              <i class="fmt-sep"></i>
              <button class="mini"><svg class="ic12"><use href="#r-para"/></svg></button><svg class="chev"><use href="#i-chev"/></svg>
              <i class="fmt-sep"></i>
              <button class="mini"><svg class="ic16"><use href="#r-rows"/></svg></button><svg class="chev"><use href="#i-chev"/></svg>
            </div>
            <div class="fmt wide">
              <button class="mini"><b>A</b></button><svg class="chev"><use href="#i-chev"/></svg>
              <button class="mini"><svg class="ic16"><use href="#r-mark"/></svg></button><svg class="chev"><use href="#i-chev"/></svg>
              <button class="mini"><svg class="ic16"><use href="#r-bucket"/></svg></button><svg class="chev"><use href="#i-chev"/></svg>
              <i class="fmt-sep"></i>
              <button class="mini"><svg class="ic14"><use href="#r-left"/></svg></button><button class="mini"><svg class="ic14"><use href="#r-mid"/></svg></button><button class="mini"><svg class="ic14"><use href="#r-right"/></svg></button>
              <i class="fmt-sep"></i>
              <button class="mini"><svg class="ic16"><use href="#r-cond"/></svg></button><svg class="chev"><use href="#i-chev"/></svg>
            </div>
            <div class="group-name">文本格式</div><svg class="launch"><use href="#r-launch"/></svg>
          </div>
          <div class="group g-conv">
            <div class="stack">
              <button class="row on"><span class="han">简</span>繁转简</button>
              <button class="row on"><span class="han">繁</span>简转繁</button>
              <button class="row on"><span class="han blue">简</span>简繁转换</button>
            </div>
            <div class="group-name">中文简繁转换</div>
          </div>
        </div>
        <div class="access-body">
          <aside class="nav-pane">
            <div class="nav-title"><h1>所有 Access 对象</h1><button class="bare"><svg class="ic14"><use href="#r-drop"/></svg></button><button class="bare"><svg class="left2"><use href="#r-left2"/></svg></button></div>
            <div class="nav-search"><input aria-label="搜索" placeholder="搜索..."><button class="bare"><svg class="ic14"><use href="#i-search"/></svg></button></div>
            <h2>窗体<svg class="up2"><use href="#r-up2"/></svg></h2>
            <ul>
              <li><svg class="form-ic"><use href="#i-form"/></svg>2-1</li>
              <li class="selected"><svg class="form-ic"><use href="#i-form"/></svg>2-2</li>
              <li><svg class="form-ic"><use href="#i-form"/></svg>2-3</li>
              <li><svg class="form-ic"><use href="#i-form"/></svg>2-4</li>
              <li><svg class="form-ic"><use href="#i-form"/></svg>2-5</li>
              <li><svg class="form-ic"><use href="#i-form"/></svg>2-6</li>
            </ul>
            <h2>模块<svg class="up2"><use href="#r-up2"/></svg></h2>
            <ul><li><svg class="form-ic"><use href="#r-module"/></svg>bas0121</li></ul>
          </aside>
          <div class="canvas"></div>
        </div>
        <div class="access-status"></div>
      </section>
      <svg class="pointer main"><use href="#i-cursor"/></svg>
    </main>

    <footer class="taskbar">
      <button class="bare sys"><svg class="ic16"><use href="#t-cortana"/></svg></button>
      <button class="bare sys"><svg class="ic16"><use href="#t-view"/></svg></button>
      <i class="grip"></i>
      <div class="apps">
        <button class="bare"><svg class="ic24"><use href="#t-swirl"/></svg></button>
        <button class="bare open"><svg class="ic24"><use href="#t-folder"/></svg></button>
        <button class="bare"><svg class="ic24"><use href="#t-calc"/></svg></button>
        <button class="bare"><span class="youdao">有道</span></button>
        <button class="bare open"><svg class="ic24"><use href="#t-snip"/></svg></button>
        <button class="bare open"><svg class="ic24"><use href="#t-e"/></svg></button>
        <button class="bare open"><svg class="ic24"><use href="#t-id"/></svg></button>
        <button class="bare open letter"><svg class="ic24"><use href="#t-access"/></svg><b>A</b></button>
        <button class="bare open"><svg class="ic24"><use href="#t-cam"/></svg></button>
        <button class="bare open current"><svg class="ic24"><use href="#t-rec"/></svg></button>
      </div>
      <div class="tray">
        <svg class="ic16"><use href="#y-dish"/></svg>
        <svg class="ic16"><use href="#y-def"/></svg>
        <svg class="ic16"><use href="#y-wx"/></svg>
        <svg class="ic16"><use href="#t-e"/></svg>
        <svg class="ic16"><use href="#y-safe"/></svg>
        <svg class="ic16"><use href="#y-blue"/></svg>
        <svg class="ic16"><use href="#y-man"/></svg>
        <svg class="ic16"><use href="#y-qq"/></svg>
        <svg class="ic16"><use href="#y-add"/></svg>
        <svg class="ic16"><use href="#i-sound"/></svg>
        <svg class="ic16"><use href="#y-net"/></svg>
        <span class="lang">英</span>
        <span class="ime">拼</span>
      </div>
      <time class="clock">17:25 周二<br>2022/3/8</time>
      <i class="peek"></i>
    </footer>
  </div>
</body>
</html>
```

FILE: styles.css
```css
* {
  box-sizing: border-box;
}
body {
  margin: 0;
  font-family: "Noto Sans", "Noto Sans CJK SC", sans-serif;
  font-size: 12px;
  line-height: 16px;
  color: #333;
}
button, input, select {
  font: inherit;
  color: inherit;
  margin: 0;
  padding: 0;
  border: 0;
  background: none;
}
select {
  appearance: none;
  outline: none;
}
a {
  color: inherit;
  text-decoration: none;
}
ul, figure, h1, h2, p {
  margin: 0;
  padding: 0;
  list-style: none;
}
svg {
  fill: none;
  stroke: currentColor;
  flex: none;
  display: block;
}
.sprite { position: absolute; width: 0; height: 0; }
.ic10 { width: 10px; height: 10px; }
.ic12 { width: 12px; height: 12px; }
.ic14 { width: 14px; height: 14px; }
.ic16 { width: 16px; height: 16px; }
.ic18 { width: 18px; height: 18px; }
.ic20 { width: 20px; height: 20px; }
.ic24 { width: 24px; height: 24px; }
.ic30 { width: 30px; height: 30px; }
.form-ic { width: 16px; height: 15px; }
.page-ic { width: 12px; height: 14px; color: #888; }
.tri { width: 6px; height: 4px; }
.chev { width: 6px; height: 4px; }
.bare {
  display: flex;
  align-items: center;
  justify-content: center;
}
.fade {
  overflow: hidden;
  white-space: nowrap;
  mask-image: linear-gradient(to right, #000 65%, transparent);
}

.desktop {
  height: 100vh;
  display: flex;
  flex-direction: column;
  overflow: hidden;
}
.workspace {
  flex: 1;
  position: relative;
  overflow: hidden;
  background: #376bc0;
}

/* Desktop shortcuts */
.shortcuts {
  position: absolute;
  left: -4px;
  top: 728px;
  display: flex;
}
.shortcut {
  position: relative;
  width: 76px;
  display: flex;
  flex-direction: column;
  align-items: center;
  color: #fff;
  text-align: center;
  line-height: 17px;
  gap: 3px;
  text-shadow: 0 1px 2px #123;
}
.shortcut .pic { width: 48px; height: 48px; }
.shortcut .link {
  position: absolute;
  left: 14px;
  top: 35px;
  width: 13px;
  height: 13px;
}

/* Project window */
.project {
  position: absolute;
  left: 347px;
  top: 600px;
  bottom: 0;
  width: 240px;
  background: #d4d0c8;
  border-left: 7px solid #8999a9;
  display: flex;
  flex-direction: column;
  padding-bottom: 3px;
}
.tree {
  flex: 1;
  background: #fdfdfd;
  border-left: 2px solid #555;
  display: flex;
  flex-direction: column;
  justify-content: space-between;
  padding-top: 104px;
  margin-bottom: 8px;
}
.tree-item {
  display: flex;
  align-items: center;
  padding-left: 26px;
  color: #000;
}
.expand {
  width: 9px;
  height: 9px;
  border: 1px solid #888;
  line-height: 7px;
  font-size: 10px;
}
.dots { width: 8px; border-top: 1px dotted #888; }
.tree-item span { margin-left: 4px; }
.hscroll {
  display: flex;
  height: 17px;
  border-top: 1px solid #ccc;
}
.hscroll button { width: 17px; font-weight: bold; }
.hthumb {
  width: 124px;
  background: #d9d9d9;
  border: 1px solid #aaa;
  text-align: center;
  font-size: 10px;
  line-height: 14px;
  font-weight: bold;
}
.prop-title {
  height: 22px;
  background: #808080;
  color: #d4d0c8;
  margin-bottom: 4px;
}
.prop-input {
  height: 17px;
  width: 100%;
  background: #fff;
  border: 1px solid #555;
}

/* Browser */
.browser {
  position: absolute;
  left: -30px;
  top: 4px;
  width: 624px;
  height: 698px;
  display: flex;
  flex-direction: column;
  background: #fdfdfd;
  box-shadow: 0 0 5px #123a78;
  overflow: hidden;
}
.tabstrip {
  display: flex;
  height: 42px;
  background: #dfe3e7;
  padding-top: 6px;
}
.tab {
  display: flex;
  align-items: center;
  gap: 5px;
  width: 205px;
  padding-left: 15px;
}
.tab + .tab { border-right: 1px solid #c6cbd0; margin: 2px 0; }
.tab.active {
  width: 170px;
  background: #fdfdfd;
  padding-left: 0;
  padding-right: 11px;
  justify-content: flex-end;
  gap: 8px;
}
.tab.active .fade { mask-image: linear-gradient(to right, #000 85%, transparent); }
.newtab { width: 37px; }
.win-btns {
  flex: 1;
  display: flex;
  align-items: center;
  padding-bottom: 6px;
  padding-left: 10px;
}
.win-btns button { width: 40px; }
.win-btns .count {
  width: 14px;
  height: 16px;
  border: 1px solid #777;
  line-height: 14px;
  margin: 0 13px 0 12px;
}
.toolbar {
  display: flex;
  align-items: center;
  height: 39px;
  border-bottom: 1px solid #e4e4e4;
  padding-left: 25px;
}
.toolbar > .bare { margin-right: 21px; }
.toolbar > .bare + .bare { margin-right: 19px; }
.url, .find {
  display: flex;
  align-items: center;
  height: 28px;
  background: #eceef0;
  border-radius: 3px;
}
.url {
  width: 186px;
  padding-left: 11px;
  gap: 9px;
  margin-right: 14px;
}
.url a { font-size: 14px; line-height: 20px; color: #111; white-space: nowrap; }
.url em { font-style: normal; color: #777; }
.find { width: 146px; padding: 0 8px 0 6px; }
.find b { font-style: italic; color: #ee4035; font-size: 13px; margin-left: 2px; }
.slide {
  display: flex;
  align-items: flex-end;
  width: 56px;
  height: 11px;
  margin: 5px 8px 0;
  align-self: flex-start;
  overflow: hidden;
}
.slide input { width: 56px; height: 16px; flex: none; }
.slide input::placeholder { color: #aaa; }
.tools {
  flex: 1;
  display: flex;
  align-items: center;
  padding-left: 16px;
}
.tool-sep { width: 1px; height: 18px; background: #ddd; margin: 0 13px; }
.back { margin: 0 17px 0 18px; gap: 5px; }
.bookmarks {
  display: flex;
  align-items: center;
  height: 28px;
  padding-left: 19px;
}
.bookmarks a { width: 81px; display: flex; gap: 5px; align-items: center; white-space: nowrap; }
.bookmarks a span { width: 49px; }
.bookmarks .first { width: 73px; }
.bookmarks .first span { width: 60px; }
.bookmarks .narrow { width: 68px; }
.bookmarks .narrow span { width: 40px; }
.bookmarks .tax { width: 83px; gap: 4px; }
.tax b {
  width: 16px;
  background: #4a72dc;
  color: #fff;
  border-radius: 2px;
  text-align: center;
}
.page {
  position: relative;
  flex: 1;
  overflow: hidden;
  background: #ebebeb;
  padding-top: 16px;
}
.page > p {
  margin: 0 0 20px 18px;
  font-size: 16px;
  line-height: 24px;
  font-weight: 300;
  color: #4a5068;
}
.page > .second { margin: 20px 0 21px 21px; }
.scrollbar {
  position: absolute;
  right: 0;
  top: 0;
  bottom: 0;
  width: 17px;
  background: #f0f0f0;
}
.up { width: 8px; height: 5px; margin: 8px 4px; transform: rotate(180deg); }
.fig-one {
  background: #fdfdfd;
  width: 546px;
  padding: 7px 0 14px;
}
.fig-two {
  background: #fdfdfd;
  width: 532px;
  padding: 4px 0 0 4px;
}
.dialogs { display: flex; gap: 14px; }
.fig-one .dialogs { margin-left: 24px; gap: 13px; }
.dialog {
  width: 256px;
  height: 150px;
  flex: none;
  border: 1px solid #2b3f55;
  border-radius: 7px;
  background: linear-gradient(#a2bfdb, #bad3ea 30px, #b9d3eb);
  padding: 0 8px 8px;
}
.dialog.small { width: 239px; height: 130px; }
.dlg-title {
  display: flex;
  align-items: center;
  height: 30px;
  gap: 5px;
  color: #000;
}
.dlg-btns {
  margin-left: auto;
  align-self: flex-start;
  display: flex;
  height: 19px;
  border: 1px solid #566f8a;
  border-top: 0;
  border-radius: 0 0 4px 4px;
  overflow: hidden;
}
.dlg-btns button {
  width: 27px;
  border-right: 1px solid #566f8a;
  background: linear-gradient(#c8d6e4, #8da5bd 55%, #a9c2d8);
}
.dlg-btns svg { width: 14px; height: 12px; }
.dlg-btns .close {
  width: 45px;
  border: 0;
  background: linear-gradient(#dc9a8c, #c3402c 55%, #d4694e);
}
.dlg-body, .dlg-info {
  background: linear-gradient(#fff 80%, #f3f3f4 82%);
  border: 1px solid #5c7288;
  color: #111;
}
.dlg-body {
  display: flex;
  height: 91px;
  padding: 6px 0 0 7px;
}
.dlg-body label { width: 54px; font-size: 16px; line-height: 20px; }
.combo {
  position: relative;
  display: flex;
  width: 78px;
  height: 24px;
  margin-right: 2px;
  border: 1px solid #8a8a8a;
  background: #fff;
}
.combo select { flex: 1; width: 50px; padding-left: 3px; font-size: 14px; }
.combo .marked {
  color: #fff;
  background: linear-gradient(#000, #000) 2px 3px / 29px 17px no-repeat;
}
.combo .one { background-size: 7px 17px; background-color: #fff; }
.drop {
  width: 18px;
  border: 1px solid #888;
  background: #e8e8e8;
  display: flex;
  align-items: center;
  justify-content: center;
  color: #000;
}
.drop .tri { width: 8px; height: 5px; }
.hot .drop { background: #c9ecf9; border-color: #41789a; }
.combo ul {
  position: absolute;
  left: -1px;
  top: 22px;
  width: 78px;
  background: #fff;
  border: 1px solid #777;
  border-bottom: 0;
  padding-top: 1px;
  font-size: 14px;
  line-height: 17px;
}
.combo li { height: 17px; padding-left: 4px; }
.combo li + li + li { height: 18px; }
.combo li.picked { background: #000; color: #fff; }
.result {
  width: 57px;
  height: 24px;
  border: 1px solid #e4e4e4;
  border-top: 2px solid #777;
  border-left: 2px solid #777;
  text-align: center;
  font-size: 14px;
  font-weight: bold;
}
.pointer { position: absolute; width: 12px; height: 19px; }
.pointer.on-drop { left: 64px; top: 9px; }
.pointer.on-list { left: 49px; top: 49px; }
.pointer.main { left: 1056px; top: 556px; width: 14px; height: 21px; filter: drop-shadow(2px 2px 1px #999); }
.tasks {
  padding: 15px 0 0 13px;
  font-family: "DejaVu Sans", "Noto Sans CJK SC", sans-serif;
  font-size: 14px;
  line-height: 20px;
  color: #111;
  white-space: nowrap;
}
.tasks div { height: 20px; }
.tasks code { font-family: "DejaVu Sans Mono", monospace; font-size: 12px; }
.dlg-info { height: 111px; padding-top: 6px; font-size: 15px; line-height: 20px; }
.info { padding-left: 11px; }
.award {
  display: flex;
  padding: 21px 0 0 14px;
  color: #777;
}
.award input {
  appearance: none;
  width: 13px;
  height: 13px;
  margin: 5px 6px 0 0;
  border: 1px solid #8e8f8f;
  background: #dcdcdc;
  box-shadow: inset 0 0 0 2px #f4f4f4;
}
.award > label { width: 66px; height: 21px; margin-top: 4px; padding-left: 1px; line-height: 19px; }
.award .focus { border: 1px dotted #000; padding-left: 0; }
.level { margin-left: 14px; }
.level .combo { width: 66px; margin-top: 11px; }
.statusbar {
  height: 27px;
  display: flex;
  align-items: center;
  background: #fafafa;
  color: #555;
}
.statusbar a { width: 200px; display: flex; justify-content: flex-end; padding-right: 15px; text-decoration: underline; white-space: nowrap; }
.statusbar .bare { width: 34px; }
.statusbar .dl { width: 68px; gap: 5px; white-space: nowrap; }

/* Access */
.access {
  position: absolute;
  left: 512px;
  right: 0;
  top: 220px;
  bottom: 0;
  display: flex;
  flex-direction: column;
  background: #f1f1f1;
  border-left: 1px solid #777;
  border-top: 1px solid #777;
}
.titlebar {
  display: flex;
  align-items: center;
  height: 34px;
  padding-left: 21px;
  background: #a4373a;
  color: #f6cfd0;
  white-space: nowrap;
}
.titlebar > .bare { gap: 5px; }
.titlebar > .dim { color: #c4696c; margin-right: 12px; }
.titlebar .qat { margin: 0 22px 0 3px; }
.qat-ic { width: 6px; height: 6px; color: #fff; }
.account {
  display: flex;
  align-items: center;
  margin-left: auto;
  gap: 11px;
  padding-right: 23px;
}
.account .bare { margin-left: 18px; }
.account .bare + .bare { margin-left: 23px; }
.avatar { width: 24px; height: 24px; }
.ribbon-tabs {
  display: flex;
  gap: 1px;
  height: 30px;
  background: #a4373a;
  color: #fff;
  padding-left: 5px;
}
.ribbon-tabs button { padding: 0 13px 2px; }
.ribbon-tabs button:first-child { padding: 0 18px 2px 12px; }
.ribbon-tabs .active { background: #f1f1f1; color: #a4373a; }
.ribbon-tabs .tell { display: flex; align-items: center; gap: 14px; padding-left: 15px; }
.bulb { width: 12px; height: 16px; }
.ribbon {
  display: flex;
  height: 95px;
  border-bottom: 1px solid #cfcfcf;
  padding-top: 3px;
  color: #a8a6a6;
  white-space: nowrap;
}
.group { position: relative; height: 91px; }
.group::after {
  content: "";
  position: absolute;
  right: 0;
  top: 1px;
  bottom: 4px;
  border-right: 1px solid #c2c2c2;
}
.g-view { width: 58px; }
.g-clip { width: 80px; }
.g-sort { width: 171px; }
.g-rec { width: 168px; }
.g-find { width: 100px; }
.g-text { width: 258px; }
.g-conv { flex: 1; }
.g-conv::after { display: none; }
.cells { display: flex; height: 69px; }
.big {
  width: 57px;
  display: flex;
  flex-direction: column;
  align-items: center;
  padding-top: 3px;
  gap: 3px;
}
.big .chev { margin-top: 3px; }
.g-clip .big { width: 53px; padding-left: 6px; }
.g-sort .big { width: 54px; }
.g-rec .big { width: 67px; }
.g-find .big { width: 60px; padding-left: 8px; }
.stack { display: flex; flex-direction: column; }
.row {
  display: flex;
  align-items: center;
  height: 23px;
  gap: 3px;
}
.row .chev { margin-left: 3px; }
.row.on { color: #222; }
.g-sort .stack { width: 75px; }
.g-sort .stack + .stack { width: 34px; }
.g-rec .records { width: 66px; }
.bold { stroke-width: 2; color: #555; }
.records .row { gap: 2px; }
.records .chev { margin-left: 8px; }
.spell {
  flex-direction: column;
  gap: 0;
  width: 17px;
  font-size: 9px;
  line-height: 12px;
  color: #333;
}
.tick { width: 16px; height: 8px; }
.abac {
  flex-direction: column;
  align-items: flex-start;
  gap: 0;
  font-size: 10px;
  line-height: 11px;
}
.mini {
  display: flex;
  align-items: center;
  justify-content: center;
  width: 24px;
  height: 23px;
}
.g-clip .mini { width: 16px; }
.group-name { text-align: center; color: #222; line-height: 22px; }
.g-clip .group-name { padding-right: 17px; }
.g-text .group-name { padding-right: 18px; }
.launch { position: absolute; right: 3px; bottom: 4px; width: 8px; height: 8px; }
.launch.on { color: #555; }
.fmt {
  display: flex;
  align-items: center;
  height: 23px;
  padding-left: 6px;
}
.fmt .chev { margin: 0 3px; }
.wide .chev { margin: 0 5px 0 4px; }
.fmt-sep { width: 1px; height: 20px; background: #cfcfcf; margin: 0 4px 0 3px; }
.pickers { padding-left: 8px; }
.picker {
  display: flex;
  align-items: center;
  height: 23px;
  background: #e3e3e3;
  border: 1px solid #8a8a8a;
  padding-right: 4px;
  margin-right: 2px;
}
.picker select { flex: 1; width: 20px; height: 21px; }
.face { width: 138px; }
.size { width: 54px; }
.g-conv { padding-left: 11px; }
.g-conv .group-name { text-align: left; }
.han { font-size: 16px; width: 16px; color: #555; }
.han.blue { color: #2b78b8; }

.access-body { flex: 1; display: flex; }
.nav-pane {
  width: 215px;
  background: #fdfdfd;
  border-right: 1px solid #888;
  box-shadow: inset -5px 0 #eceef2;
  padding: 0 5px 0 4px;
}
.nav-title {
  display: flex;
  align-items: center;
  height: 32px;
  padding-left: 3px;
  color: #444;
}
.nav-title h1 {
  width: 168px;
  font-size: 21px;
  line-height: 32px;
  font-weight: normal;
  white-space: nowrap;
  color: #a4373a;
}
.nav-title .bare + .bare { margin-left: 8px; }
.left2 { width: 9px; height: 8px; }
.nav-search {
  display: flex;
  height: 24px;
  margin: 0 1px;
  border: 1px solid #ababab;
}
.nav-search input { flex: 1; width: 100px; padding-left: 2px; font-style: italic; }
.nav-search input::placeholder { color: #444; }
.nav-search button { width: 17px; border-left: 1px solid #ababab; color: #3a6a9c; }
.nav-search svg { transform: scaleX(-1); stroke-width: 2; }
.nav-pane h2 {
  display: flex;
  align-items: center;
  justify-content: space-between;
  height: 20px;
  padding: 0 12px 0 8px;
  font-size: 13px;
  color: #555;
}
.up2 { width: 8px; height: 9px; }
.nav-pane ul {
  display: flex;
  flex-direction: column;
  gap: 2px;
}
.nav-pane li {
  display: flex;
  align-items: center;
  gap: 11px;
  height: 22px;
  padding-left: 11px;
  font-size: 13px;
  color: #555;
}
.nav-pane li.selected { background: #f9c1c2; color: #333; }
.canvas {
  flex: 1;
  background: linear-gradient(#ededed 24px, #e4e4e4 24px);
}
.access-status { height: 6px; border-top: 1px solid #b8b8b8; background: #f1f1f1; }

/* Taskbar */
.taskbar {
  display: flex;
  align-items: center;
  height: 40px;
  padding-left: 16px;
  color: #fff;
  background: linear-gradient(to right, #202d47 270px, #3e3e3e 380px, #424242);
}
.sys { width: 48px; height: 40px; }
.grip {
  width: 4px;
  height: 16px;
  border: 1px solid #6a6a6a;
  border-width: 0 1px;
  margin: 0 12px 0 260px;
}
.apps { display: flex; }
.apps .bare {
  position: relative;
  width: 49px;
  height: 40px;
}
.open::after {
  content: "";
  position: absolute;
  left: 4px;
  right: 4px;
  bottom: 0;
  height: 2px;
  background: #5f86c0;
}
.apps .current { background: #666; }
.current::after { left: 0; right: 0; }
.youdao {
  width: 24px;
  line-height: 24px;
  border-radius: 4px;
  background: #f20d20;
  font-size: 10px;
  font-weight: bold;
}
.letter b { position: absolute; left: 14px; top: 13px; }
.tray {
  display: flex;
  align-items: center;
  gap: 8px;
  margin-left: auto;
}
.lang { font-size: 14px; }
.ime {
  width: 14px;
  margin: 0 8px 0 6px;
  background: #fff;
  color: #111;
  text-align: center;
  line-height: 14px;
}
.clock { position: relative; width: 80px; text-align: center; line-height: 17px; padding-bottom: 1px; margin: 0 3px 0 1px; }
.clock::after {
  content: "";
  position: absolute;
  right: 7px;
  top: 1px;
  width: 6px;
  height: 6px;
  border-radius: 3px;
  background: #e01b1b;
}
.peek { width: 1px; height: 14px; margin-left: 5px; background: #ddd; }
```
